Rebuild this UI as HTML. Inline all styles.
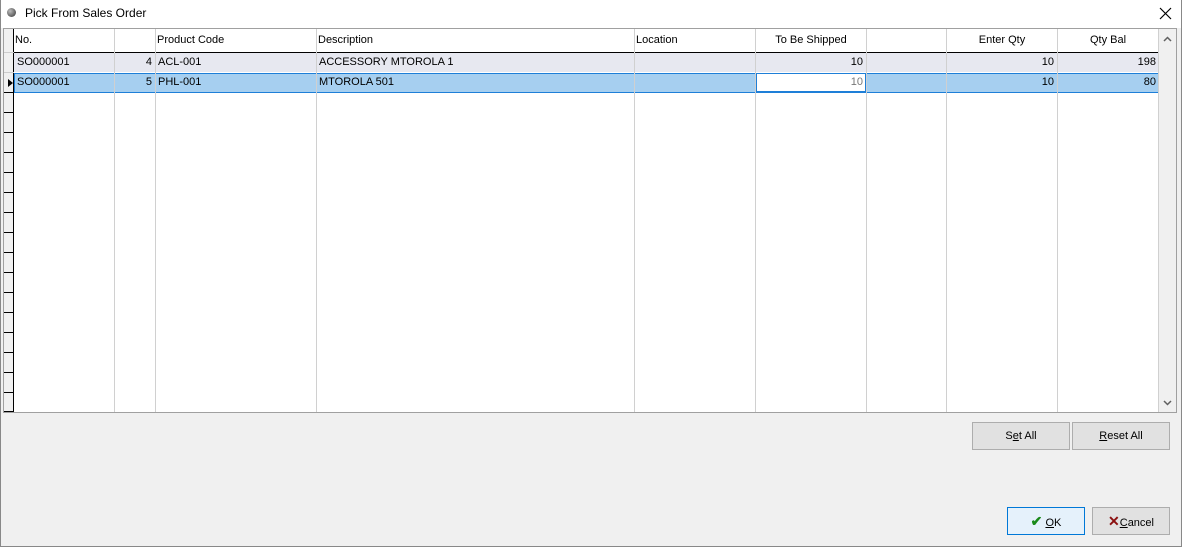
<!DOCTYPE html>
<html><head><style>
body{margin:0;width:1182px;height:547px;background:#f0f0f0;font-family:"Liberation Sans",sans-serif;font-size:11px;color:#000;position:relative;overflow:hidden}
.a{position:absolute}
.t{position:absolute;white-space:nowrap;line-height:22px}
.r{text-align:right}
.vl{position:absolute;width:1px;background:#d0d0d0}
.btn{position:absolute;background:#e1e1e1;border:1px solid #adadad;box-sizing:border-box;text-align:center;line-height:27px;font-size:11px}
</style></head><body>
<div class="a" style="left:0;top:0;width:1182px;height:28px;background:#fff"></div>
<div class="a" style="left:0;top:0;width:1px;height:547px;background:#888"></div>
<div class="a" style="left:1181px;top:0;width:1px;height:547px;background:#888"></div>
<div class="a" style="left:0;top:546px;width:1182px;height:1px;background:#888"></div>
<div class="a" style="left:7px;top:8px;width:9px;height:9px;border-radius:50%;background:radial-gradient(circle at 35% 35%,#bbb,#333)"></div>
<div class="t" style="left:25px;top:2px;font-size:12px">Pick From Sales Order</div>
<svg class="a" style="left:1159px;top:7px" width="13" height="13"><path d="M1 1L12 12M12 1L1 12" stroke="#000" stroke-width="1.2"/></svg>

<div class="a" style="left:3px;top:28px;width:1174px;height:385px;background:#fff;border:1px solid #a0a0a0;box-sizing:border-box"></div>
<div class="a" style="left:4px;top:29px;width:10px;height:383px;background:#f0f0f0"></div>
<div class="a" style="left:13px;top:29px;width:1px;height:383px;background:#000"></div>
<div class="a" style="left:4px;top:52px;width:10px;height:1px;background:#ccc"></div>
<div class="a" style="left:4px;top:72px;width:10px;height:1px;background:#ccc"></div>
<div class="a" style="left:4px;top:92px;width:10px;height:1px;background:#000"></div>
<div class="a" style="left:4px;top:112px;width:10px;height:1px;background:#000"></div>
<div class="a" style="left:4px;top:132px;width:10px;height:1px;background:#000"></div>
<div class="a" style="left:4px;top:152px;width:10px;height:1px;background:#000"></div>
<div class="a" style="left:4px;top:172px;width:10px;height:1px;background:#000"></div>
<div class="a" style="left:4px;top:192px;width:10px;height:1px;background:#000"></div>
<div class="a" style="left:4px;top:212px;width:10px;height:1px;background:#000"></div>
<div class="a" style="left:4px;top:232px;width:10px;height:1px;background:#000"></div>
<div class="a" style="left:4px;top:252px;width:10px;height:1px;background:#000"></div>
<div class="a" style="left:4px;top:272px;width:10px;height:1px;background:#000"></div>
<div class="a" style="left:4px;top:292px;width:10px;height:1px;background:#000"></div>
<div class="a" style="left:4px;top:312px;width:10px;height:1px;background:#000"></div>
<div class="a" style="left:4px;top:332px;width:10px;height:1px;background:#000"></div>
<div class="a" style="left:4px;top:352px;width:10px;height:1px;background:#000"></div>
<div class="a" style="left:4px;top:372px;width:10px;height:1px;background:#000"></div>
<div class="a" style="left:4px;top:392px;width:10px;height:1px;background:#000"></div>
<div class="a" style="left:4px;top:411px;width:10px;height:1px;background:#000"></div>
<div class="a" style="left:8px;top:79px;width:0;height:0;border-left:5px solid #000;border-top:4px solid transparent;border-bottom:4px solid transparent"></div>

<div class="a" style="left:14px;top:53px;width:1144px;height:19px;background:#e7e8f0"></div>
<div class="a" style="left:14px;top:73px;width:1145px;height:20px;background:#a6cff0;border:1px solid #1e7fd8;box-sizing:border-box"></div>
<div class="a" style="left:14px;top:52px;width:1145px;height:1px;background:#000"></div>

<div class="vl" style="left:114px;top:29px;height:383px"></div>
<div class="vl" style="left:155px;top:29px;height:383px"></div>
<div class="vl" style="left:316px;top:29px;height:383px"></div>
<div class="vl" style="left:634px;top:29px;height:383px"></div>
<div class="vl" style="left:755px;top:29px;height:383px"></div>
<div class="vl" style="left:866px;top:29px;height:383px"></div>
<div class="vl" style="left:946px;top:29px;height:383px"></div>
<div class="vl" style="left:1057px;top:29px;height:383px"></div>
<div class="vl" style="left:1158px;top:29px;height:383px"></div>
<div class="a" style="left:1159px;top:29px;width:17px;height:383px;background:#f0f0f0"></div>
<svg class="a" style="left:1163px;top:36px" width="9" height="6"><path d="M1 5L4.5 1.5L8 5" fill="none" stroke="#606060" stroke-width="1.5"/></svg>
<svg class="a" style="left:1163px;top:400px" width="9" height="6"><path d="M1 1L4.5 4.5L8 1" fill="none" stroke="#606060" stroke-width="1.5"/></svg>

<div class="a" style="left:756px;top:73px;width:110px;height:19px;background:#fff;border:1px solid #1e7fd8;box-sizing:border-box"></div>

<div class="t" style="left:15px;top:29px">No.</div>
<div class="t" style="left:157px;top:29px">Product Code</div>
<div class="t" style="left:318px;top:29px">Description</div>
<div class="t" style="left:636px;top:29px">Location</div>
<div class="t" style="left:756px;top:29px;width:110px;text-align:center">To Be Shipped</div>
<div class="t" style="left:947px;top:29px;width:110px;text-align:center">Enter Qty</div>
<div class="t" style="left:1058px;top:29px;width:100px;text-align:center">Qty Bal</div>

<div class="t" style="left:17px;top:51px">SO000001</div>
<div class="t r" style="left:115px;top:51px;width:37px">4</div>
<div class="t" style="left:158px;top:51px">ACL-001</div>
<div class="t" style="left:319px;top:51px">ACCESSORY MTOROLA 1</div>
<div class="t r" style="left:756px;top:51px;width:107px">10</div>
<div class="t r" style="left:947px;top:51px;width:107px">10</div>
<div class="t r" style="left:1058px;top:51px;width:98px">198</div>

<div class="t" style="left:17px;top:71px">SO000001</div>
<div class="t r" style="left:115px;top:71px;width:37px">5</div>
<div class="t" style="left:158px;top:71px">PHL-001</div>
<div class="t" style="left:319px;top:71px">MTOROLA 501</div>
<div class="t r" style="left:756px;top:71px;width:107px;color:#777">10</div>
<div class="t r" style="left:947px;top:71px;width:107px">10</div>
<div class="t r" style="left:1058px;top:71px;width:98px">80</div>

<div class="btn" style="left:972px;top:422px;width:98px;height:28px">S<u>e</u>t All</div>
<div class="btn" style="left:1072px;top:422px;width:98px;height:28px"><u>R</u>eset All</div>
<div class="btn" style="left:1007px;top:507px;width:78px;height:28px;background:#e5f1fb;border-color:#0078d7"><span style="color:#1a8a1a;font-weight:bold;font-size:14px">✔</span> <u>O</u>K</div>
<div class="btn" style="left:1092px;top:507px;width:78px;height:28px"><span style="color:#8b1010;font-weight:bold;font-size:14px">✕</span><u>C</u>ancel</div>
</body></html>
